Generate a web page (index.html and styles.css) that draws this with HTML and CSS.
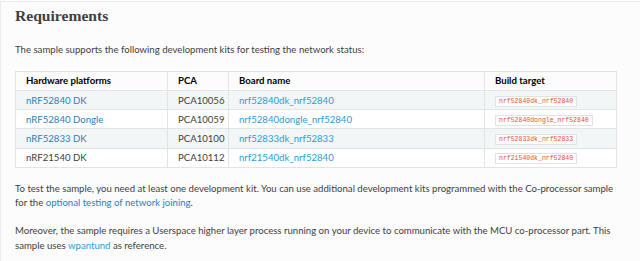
FILE: index.html
```html
<!DOCTYPE html>
<html>
<head>
<meta charset="utf-8">
<link rel="stylesheet" href="styles.css">
</head>
<body>
<div class="page">
  <h2 class="title">Requirements</h2>
  <p class="para">The sample supports the following development kits for testing the network status:</p>
  <table class="kits">
    <colgroup>
      <col class="c1"><col class="c2"><col class="c3"><col class="c4">
    </colgroup>
    <thead>
      <tr><th>Hardware platforms</th><th>PCA</th><th>Board name</th><th>Build target</th></tr>
    </thead>
    <tbody>
      <tr class="odd"><td><a class="hw">nRF52840 DK</a></td><td>PCA10056</td><td><a class="board">nrf52840dk_nrf52840</a></td><td><code class="tgt">nrf52840dk_nrf52840</code></td></tr>
      <tr><td><a class="hw">nRF52840 Dongle</a></td><td>PCA10059</td><td><a class="board">nrf52840dongle_nrf52840</a></td><td><code class="tgt">nrf52840dongle_nrf52840</code></td></tr>
      <tr class="odd"><td><a class="hw">nRF52833 DK</a></td><td>PCA10100</td><td><a class="board">nrf52833dk_nrf52833</a></td><td><code class="tgt">nrf52833dk_nrf52833</code></td></tr>
      <tr><td>nRF21540 DK</td><td>PCA10112</td><td><a class="board">nrf21540dk_nrf52840</a></td><td><code class="tgt">nrf21540dk_nrf52840</code></td></tr>
    </tbody>
  </table>
  <p class="para">To test the sample, you need at least one development kit. You can use additional development kits programmed with the Co-processor sample for the <a class="hw">optional testing of network joining</a>.</p>
  <p class="para">Moreover, the sample requires a Userspace higher layer process running on your device to communicate with the MCU co-processor part. This sample uses <a class="board">wpantund</a> as reference.</p>
</div>
</body>
</html>
```
FILE: styles.css
```css
html, body {
  margin: 0;
  padding: 0;
  background: #fcfcfc;
}
body {
  width: 640px;
  height: 261px;
  overflow: hidden;
}
.page {
  box-sizing: border-box;
  height: 261px;
  margin-top: 1px;
  border-top: 1px solid #ececec;
  border-left: 1px solid #ececec;
  padding: 5px 0 0 14px;
  font-family: Lato, "Liberation Sans", sans-serif;
  font-size: 9.6px;
  line-height: 14.6px;
  color: #404040;
}
.title {
  margin: 0 0 18px 0;
  font-family: "Liberation Serif", serif;
  font-weight: bold;
  font-size: 15.6px;
  line-height: 18px;
  color: #404040;
}
.para {
  margin: 0 0 13.4px 0;
  width: 605px;
}
.kits {
  width: 601px;
  table-layout: fixed;
  border-collapse: collapse;
  border: 1px solid #e1e4e5;
  margin-bottom: 14px;
}
.c1 { width: 152px; }
.c2 { width: 61px; }
.c3 { width: 256px; }
.c4 { width: 132px; }
.kits th, .kits td {
  text-align: left;
  padding: 2.5px 10px 2.6px 10px;
  line-height: 13px;
  border-bottom: 1px solid #e1e4e5;
  border-left: 1px solid #e1e4e5;
  white-space: nowrap;
  overflow: hidden;
}
.kits th {
  font-weight: bold;
  color: #000;
  background: #fcfcfc;
}
.kits td {
  background: #fff;
}
.kits tr.odd td {
  background: #f3f6f6;
}
.hw {
  color: #2980b9;
  text-decoration: none;
}
.board {
  color: #2c9bd6;
  text-decoration: none;
}
.tgt {
  display: inline-block;
  font-family: "Liberation Mono", monospace;
  font-size: 6.5px;
  line-height: 9px;
  color: #e74c3c;
  background: #fff;
  border: 1px solid #e1e4e5;
  padding: 0 3px;
  vertical-align: middle;
}
```
